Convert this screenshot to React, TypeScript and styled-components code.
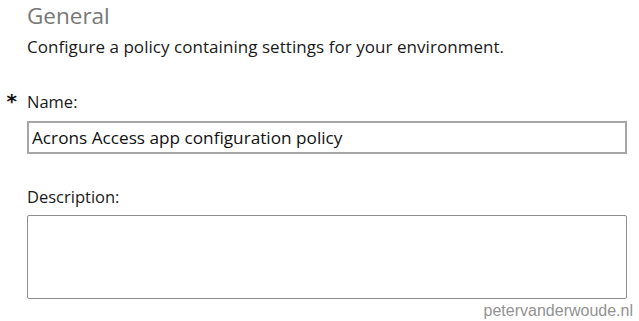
import React from 'react';
import styled, { createGlobalStyle } from 'styled-components';

const GlobalStyle = createGlobalStyle`
  body {
    margin: 0;
    background: #fff;
    font-family: "Open Sans", "Noto Sans", sans-serif;
    color: #1a1a1a;
  }
`;

const Page = styled.div`
  width: 639px;
  height: 321px;
  overflow: hidden;
  box-sizing: border-box;
  padding-top: 1px;
  display: grid;
  grid-template-columns: 27px 600px;
  align-content: start;
`;

const Gutter = styled.div`
  display: flex;
  justify-content: flex-end;
  align-items: flex-start;
  padding-right: 10px;
`;

const Title = styled.h2`
  grid-column: 2;
  margin: 0;
  font-size: 22.5px;
  font-weight: 400;
  color: #777;
  line-height: 30px;
`;

const Subtitle = styled.p`
  grid-column: 2;
  margin: 5px 0 0;
  font-size: 17px;
  line-height: 22px;
  letter-spacing: 0.05px;
`;

const Required = styled.span`
  font-family: "DejaVu Sans", sans-serif;
  font-size: 20px;
  font-weight: 700;
  line-height: 22px;
  color: #111;
  margin-top: 32px;
`;

const Field = styled.div``;

const Label = styled.label<{ $gap: number }>`
  display: block;
  margin-top: ${p => p.$gap}px;
  font-size: 16.5px;
  line-height: 22px;
`;

const TextBox = styled.div`
  margin-top: 8px;
  height: 33px;
  box-sizing: border-box;
  border: 2px solid #a6a6a6;
  padding: 0 3px;
  display: flex;
  align-items: center;
  font-size: 17.2px;
  color: #111;
`;

const TextArea = styled.div`
  margin-top: 7px;
  height: 84px;
  box-sizing: border-box;
  border: 1px solid #8f8f8f;
  border-radius: 2px;
`;

const Watermark = styled.div`
  grid-column: 2;
  text-align: right;
  font-family: "Liberation Sans", Arial, sans-serif;
  font-size: 16px;
  color: #929292;
  line-height: 18px;
  margin-top: 3px;
  margin-right: -6px;
`;

export default function App() {
  return (
    <>
      <GlobalStyle />
      <Page>
        <Title>General</Title>
        <Subtitle>Configure a policy containing settings for your environment.</Subtitle>

        <Gutter>
          <Required>*</Required>
        </Gutter>
        <Field>
          <Label $gap={33}>Name:</Label>
          <TextBox>Acrons Access app configuration policy</TextBox>
        </Field>

        <Gutter />
        <Field>
          <Label $gap={32}>Description:</Label>
          <TextArea />
        </Field>

        <Watermark>petervanderwoude.nl</Watermark>
      </Page>
    </>
  );
}
